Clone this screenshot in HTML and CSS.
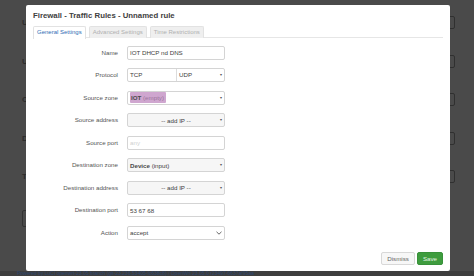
FILE: index.html
```html
<!DOCTYPE html>
<html lang="en">
<head>
    <meta charset="UTF-8">
    <title>Firewall - Traffic Rules</title>
    <link rel="stylesheet" href="styles.css">
</head>
<body>
    <div class="page">
        <div class="page-row"><span class="page-lbl">U</span><span class="page-btn"></span></div>
        <div class="page-row"><span class="page-lbl">U</span><span class="page-btn"></span></div>
        <div class="page-row"><span class="page-lbl">C</span><span class="page-btn"></span></div>
        <div class="page-row"><span class="page-lbl">D</span><span class="page-btn"></span></div>
        <div class="page-row"><span class="page-lbl">T</span><span class="page-btn"></span></div>
        <div class="page-row"><span class="page-input"></span></div>
        <div class="footer">Powered by LuCI openwrt-23.05 branch (git-23.236.53405-fc638c8) / OpenWrt 23.05.0 r23497-6637af95aa</div>
    </div>

    <div class="modal">
        <h4 class="title">Firewall - Traffic Rules - Unnamed rule</h4>
        <div class="tabs">
            <span class="tab active">General Settings</span>
            <span class="tab">Advanced Settings</span>
            <span class="tab">Time Restrictions</span>
        </div>
        <div class="form">
            <label>Name</label>
            <div class="field"><span class="val">IOT DHCP nd DNS</span></div>

            <label>Protocol</label>
            <div class="field dd">
                <span class="proto">TCP</span>
                <span class="proto">UDP</span>
                <span class="arrow">&#9662;</span>
            </div>

            <label>Source zone</label>
            <div class="field dd">
                <span class="zone"><b>IOT</b> (empty)</span>
                <span class="arrow">&#9662;</span>
            </div>

            <label>Source address</label>
            <div class="field dd grey">
                <span class="center">-- add IP --</span>
                <span class="arrow">&#9662;</span>
            </div>

            <label>Source port</label>
            <div class="field"><span class="val ph">any</span></div>

            <label>Destination zone</label>
            <div class="field dd grey">
                <span class="val"><b>Device</b> (input)</span>
                <span class="arrow">&#9662;</span>
            </div>

            <label>Destination address</label>
            <div class="field dd grey">
                <span class="center">-- add IP --</span>
                <span class="arrow">&#9662;</span>
            </div>

            <label>Destination port</label>
            <div class="field"><span class="val">53 67 68</span></div>

            <label>Action</label>
            <div class="field dd">
                <span class="val">accept</span>
                <svg class="chev" width="6" height="4" viewBox="0 0 6 4"><path d="M0.5 0.8 L3 3.2 L5.5 0.8" fill="none" stroke="#555" stroke-width="0.9"/></svg>
            </div>
        </div>
        <div class="actions">
            <span class="btn">Dismiss</span>
            <span class="btn save">Save</span>
        </div>
    </div>
</body>
</html>
```

FILE: styles.css
```css
*{
    box-sizing: border-box;
}
html,body{
    margin: 0;
    padding: 0;
}
body{
    width: 474px;
    height: 276px;
    overflow: hidden;
    position: relative;
    background: #4a4a4a;
    font-family: "Liberation Sans", Arial, sans-serif;
}
/* page behind the dialog */
.page{
    display: flex;
    flex-direction: column;
    height: 276px;
    padding-top: 16px;
    overflow: hidden;
    background: #4a4a4a;
}
.page-row{
    display: flex;
    align-items: center;
    height: 13px;
    margin-bottom: 25.5px;
    padding: 0 19px 0 22px;
}
.page-lbl{
    font-size: 8px;
    font-weight: bold;
    color: #2c2c2c;
}
.page-btn{
    margin-left: auto;
    width: 40px;
    height: 13px;
    border: 1px solid #303030;
    border-radius: 2px;
}
.page-input{
    width: 60px;
    height: 17px;
    margin-top: 6px;
    border: 1px solid #333;
    border-radius: 2px;
}
.footer{
    margin-top: auto;
    height: 5px;
    padding-left: 17px;
    font-size: 5px;
    line-height: 5px;
    color: #2b4670;
    background: #3e3e3e;
    white-space: nowrap;
}
/* dialog */
.modal{
    position: absolute;
    left: 26px;
    top: 5px;
    width: 424px;
    height: 266px;
    padding: 7px;
    display: flex;
    flex-direction: column;
    background: #fff;
    border-radius: 2px;
}
.title{
    margin: 0;
    height: 8px;
    line-height: 8px;
    font-size: 7.8px;
    font-weight: bold;
    color: #404040;
    margin-top: -0.5px;
}
.tabs{
    display: flex;
    gap: 3px;
    height: 12px;
    margin-top: 6px;
    border-bottom: 1px solid #e6e6e6;
}
.tab{
    height: 12px;
    padding: 0 3px;
    font-size: 6px;
    line-height: 11px;
    color: #b0b0b0;
    background: #efefef;
    border: 1px solid #e2e2e2;
    border-bottom: none;
    border-radius: 2px 2px 0 0;
}
.tab.active{
    color: #2f6db5;
    background: #fff;
    height: 13px;
    margin-bottom: -1px;
}
.form{
    display: grid;
    grid-template-columns: 85px 98px;
    column-gap: 9px;
    row-gap: 8.5px;
    grid-auto-rows: 14px;
    margin-top: 8px;
}
.form label{
    text-align: right;
    font-size: 6.2px;
    line-height: 14px;
    color: #555;
}
.field{
    position: relative;
    display: flex;
    align-items: center;
    height: 14px;
    padding: 0 2px;
    border: 1px solid #d4d4d4;
    border-radius: 2px;
    font-size: 6.2px;
    color: #404040;
    background: #fff;
}
.field.grey{
    background: #f6f6f6;
}
.ph{
    color: #d0d0d0;
}
.proto{
    width: 46px;
    height: 12px;
    line-height: 12px;
}
.proto + .proto{
    border-left: 1px solid #dcdcdc;
    padding-left: 2px;
}
.zone{
    height: 11px;
    line-height: 11px;
    padding: 0 2px 0 1px;
    color: #9a749a;
    background: #cfa6cf;
    border-radius: 1px;
}
.zone b,.val b{
    color: #4a4a4a;
}
.center{
    flex: 1;
    text-align: center;
}
.arrow{
    position: absolute;
    right: 2px;
    top: 0;
    line-height: 12px;
    font-size: 4px;
    color: #555;
}
.chev{
    position: absolute;
    right: 2px;
    top: 4px;
}
.actions{
    display: flex;
    justify-content: flex-end;
    gap: 2px;
    margin-top: auto;
    margin-bottom: -1px;
}
.btn{
    height: 13px;
    padding: 0 5px;
    font-size: 6.2px;
    line-height: 11px;
    color: #666;
    background: #f7f7f7;
    border: 1px solid #d8d8d8;
    border-radius: 2px;
}
.btn.save{
    color: #e8f5e8;
    background: #3e9c3e;
    border-color: #38913a;
}
```
